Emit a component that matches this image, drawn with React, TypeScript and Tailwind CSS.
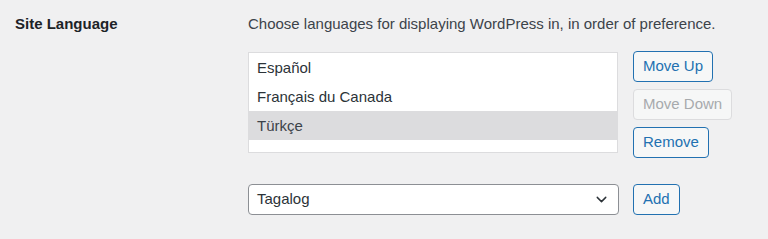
import { ChevronDown } from "lucide-react";

const languages = ["Español", "Français du Canada", "Türkçe"];

function Button({ label, disabled }: { label: string; disabled?: boolean }) {
  return (
    <button
      type="button"
      disabled={disabled}
      className={
        disabled
          ? "h-[31px] rounded-[4px] border border-[#dcdcde] bg-[#f6f7f7] px-[9px] text-[15px] text-[#a7aaad]"
          : "h-[31px] rounded-[4px] border border-[#2271b1] bg-[#f6f7f7] px-[9px] text-[15px] text-[#2271b1]"
      }
    >
      {label}
    </button>
  );
}

export default function App() {
  return (
    <div className="h-[239px] w-[768px] bg-[#f0f0f1] font-['Liberation_Sans',Arial,sans-serif] text-[#1d2327]">
      <div className="flex">
        <div className="w-[248px] pl-[15px] pt-[14px] text-[15px] font-bold leading-[20px]">
          Site Language
        </div>
        <div className="flex flex-col pt-[14px]">
          <p className="text-[15px] leading-[20px] text-[#3c434a]">
            Choose languages for displaying WordPress in, in order of preference.
          </p>
          <div className="mt-[18px] flex gap-[15px]">
            <ul className="h-[101px] w-[370px] border border-[#dcdcde] bg-white">
              {languages.map((lang, i) => (
                <li
                  key={lang}
                  className={
                    i === 2
                      ? "h-[29px] bg-[#dcdcde] pl-[8px] text-[15px] leading-[29px] text-[#3c434a]"
                      : "h-[29px] pl-[8px] text-[15px] leading-[29px] text-[#2c3338]"
                  }
                >
                  {lang}
                </li>
              ))}
            </ul>
            <div className="-mt-[1px] flex flex-col items-start gap-[7px]">
              <Button label="Move Up" />
              <Button label="Move Down" disabled />
              <Button label="Remove" />
            </div>
          </div>
          <div className="mt-[26px] flex gap-[14px]">
            <div className="flex h-[31px] w-[371px] items-center justify-between rounded-[4px] border border-[#8c8f94] bg-white pl-[8px] pr-[8px]">
              <span className="text-[15px] text-[#2c3338]">Tagalog</span>
              <ChevronDown size={17} strokeWidth={2} className="text-[#2c3338]" />
            </div>
            <Button label="Add" />
          </div>
        </div>
      </div>
    </div>
  );
}
